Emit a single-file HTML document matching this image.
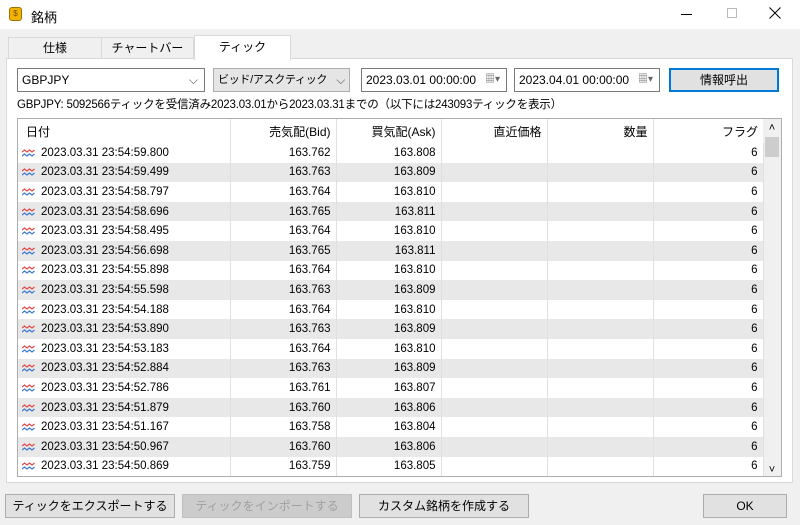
<!DOCTYPE html>
<html><head><meta charset="utf-8"><style>
*{margin:0;padding:0;box-sizing:border-box}
body{width:800px;height:525px;background:#f0f0f0;font-family:"Liberation Sans","Noto Sans CJK JP",sans-serif;font-size:12px;color:#000;position:relative;overflow:hidden}
.abs{position:absolute}
.title{left:0;top:0;width:800px;height:29px;background:#fff}
.tab{top:37px;height:22px;border:1px solid #d9d9d9;border-bottom:none;background:#f0f0f0;text-align:center;line-height:21px}
.panel{left:6px;top:58px;width:787px;height:425px;background:#fff;border:1px solid #d9d9d9}
.box{height:24px;border:1px solid #7a7a7a;background:#fff;line-height:22px;padding-left:4px;white-space:nowrap;overflow:hidden}
.btn{height:24px;border:1px solid #adadad;background:#e1e1e1;text-align:center;line-height:22px}
table{border-collapse:collapse;position:absolute;left:18px;top:119px;width:745px;table-layout:fixed}
td{height:19.6px;padding:0 5px;text-align:right;border-right:1px solid #e0e0e0;white-space:nowrap;overflow:hidden;font-size:11.5px}
td:first-child{text-align:left;padding-left:4px}
tr.h td{height:24px;vertical-align:middle;font-size:12px}
tr.g td{background:#e8e8e8}
td svg{vertical-align:-1px;margin-right:6px}
</style></head><body>
<svg width="0" height="0" style="position:absolute"><defs><g id="w"><path d="M0 3 L2.5 1 L5 3 L7.5 1 L10 3 L12.5 1" stroke="#e04848" fill="none" stroke-width="1.2"/><path d="M0 7 L2.5 5 L5 7 L7.5 5 L10 7 L12.5 5" stroke="#3a78d0" fill="none" stroke-width="1.2"/></g></defs></svg>
<div class="abs title">
<div class="abs" style="left:9px;top:7px;width:13px;height:14px;background:#f0b400;border-radius:3px;border:1px solid #a07000;font-size:8px;line-height:12px;text-align:center;color:#7a4a00">$</div>
<div class="abs" style="left:31px;top:7px;font-size:13px">銘柄</div>
<div class="abs" style="left:681px;top:14px;width:11px;height:1px;background:#000"></div>
<div class="abs" style="left:727px;top:8px;width:10px;height:10px;border:1px solid #bbb"></div>
<svg class="abs" style="left:769px;top:7px" width="12" height="12"><path d="M0.5 0.5 L11.5 11.5 M11.5 0.5 L0.5 11.5" stroke="#000" stroke-width="1"/></svg>
</div>
<div class="abs tab" style="left:8px;width:94px">仕様</div>
<div class="abs tab" style="left:101px;width:93px">チャートバー</div>
<div class="abs panel"></div>
<div class="abs tab" style="left:194px;top:35px;width:97px;height:25px;background:#fff;line-height:22px;z-index:2">ティック</div>
<div class="abs box" style="left:17px;top:68px;width:188px">GBPJPY<span class="abs" style="right:6px;top:0;color:#555">⌵</span></div>
<div class="abs box" style="left:213px;top:68px;width:137px;background:#e5e5e5;border-color:#adadad;font-size:11px;letter-spacing:-0.3px">ビッド/アスクティック<span class="abs" style="right:4px;top:0;color:#555;background:#e5e5e5;padding-left:3px;font-size:12px">⌵</span></div>
<div class="abs box" style="left:361px;top:68px;width:146px">2023.03.01 00:00:00<span class="abs" style="right:6px;top:0;color:#666;font-size:10px">▦▾</span></div>
<div class="abs box" style="left:514px;top:68px;width:146px">2023.04.01 00:00:00<span class="abs" style="right:6px;top:0;color:#666;font-size:10px">▦▾</span></div>
<div class="abs btn" style="left:669px;top:68px;width:110px;border:2px solid #0078d7;line-height:20px">情報呼出</div>
<div class="abs" style="left:17px;top:96px;font-size:11.5px;letter-spacing:-0.2px">GBPJPY: 5092566ティックを受信済み2023.03.01から2023.03.31までの（以下には243093ティックを表示）</div>
<div class="abs" style="left:17px;top:118px;width:765px;height:359px;border:1px solid #adadad"></div>
<div class="abs" style="left:763px;top:119px;width:18px;height:357px;background:#f0f0f0"><div style="text-align:center;font-size:11px;line-height:18px">˄</div><div style="margin:0 2px;height:20px;background:#cdcdcd"></div><div class="abs" style="bottom:0;width:18px;text-align:center;font-size:11px">˅</div></div>
<table>
<colgroup><col style="width:212px"><col style="width:106px"><col style="width:105px"><col style="width:106px"><col style="width:106px"><col style="width:110px"></colgroup>
<tr class="h"><td style="padding-left:8px">日付</td><td>売気配(Bid)</td><td>買気配(Ask)</td><td>直近価格</td><td>数量</td><td style="border:none">フラグ</td></tr>
<tr><td><svg width="13" height="8"><use href="#w"/></svg>2023.03.31 23:54:59.800</td><td>163.762</td><td>163.808</td><td></td><td></td><td>6</td></tr>
<tr class="g"><td><svg width="13" height="8"><use href="#w"/></svg>2023.03.31 23:54:59.499</td><td>163.763</td><td>163.809</td><td></td><td></td><td>6</td></tr>
<tr><td><svg width="13" height="8"><use href="#w"/></svg>2023.03.31 23:54:58.797</td><td>163.764</td><td>163.810</td><td></td><td></td><td>6</td></tr>
<tr class="g"><td><svg width="13" height="8"><use href="#w"/></svg>2023.03.31 23:54:58.696</td><td>163.765</td><td>163.811</td><td></td><td></td><td>6</td></tr>
<tr><td><svg width="13" height="8"><use href="#w"/></svg>2023.03.31 23:54:58.495</td><td>163.764</td><td>163.810</td><td></td><td></td><td>6</td></tr>
<tr class="g"><td><svg width="13" height="8"><use href="#w"/></svg>2023.03.31 23:54:56.698</td><td>163.765</td><td>163.811</td><td></td><td></td><td>6</td></tr>
<tr><td><svg width="13" height="8"><use href="#w"/></svg>2023.03.31 23:54:55.898</td><td>163.764</td><td>163.810</td><td></td><td></td><td>6</td></tr>
<tr class="g"><td><svg width="13" height="8"><use href="#w"/></svg>2023.03.31 23:54:55.598</td><td>163.763</td><td>163.809</td><td></td><td></td><td>6</td></tr>
<tr><td><svg width="13" height="8"><use href="#w"/></svg>2023.03.31 23:54:54.188</td><td>163.764</td><td>163.810</td><td></td><td></td><td>6</td></tr>
<tr class="g"><td><svg width="13" height="8"><use href="#w"/></svg>2023.03.31 23:54:53.890</td><td>163.763</td><td>163.809</td><td></td><td></td><td>6</td></tr>
<tr><td><svg width="13" height="8"><use href="#w"/></svg>2023.03.31 23:54:53.183</td><td>163.764</td><td>163.810</td><td></td><td></td><td>6</td></tr>
<tr class="g"><td><svg width="13" height="8"><use href="#w"/></svg>2023.03.31 23:54:52.884</td><td>163.763</td><td>163.809</td><td></td><td></td><td>6</td></tr>
<tr><td><svg width="13" height="8"><use href="#w"/></svg>2023.03.31 23:54:52.786</td><td>163.761</td><td>163.807</td><td></td><td></td><td>6</td></tr>
<tr class="g"><td><svg width="13" height="8"><use href="#w"/></svg>2023.03.31 23:54:51.879</td><td>163.760</td><td>163.806</td><td></td><td></td><td>6</td></tr>
<tr><td><svg width="13" height="8"><use href="#w"/></svg>2023.03.31 23:54:51.167</td><td>163.758</td><td>163.804</td><td></td><td></td><td>6</td></tr>
<tr class="g"><td><svg width="13" height="8"><use href="#w"/></svg>2023.03.31 23:54:50.967</td><td>163.760</td><td>163.806</td><td></td><td></td><td>6</td></tr>
<tr><td><svg width="13" height="8"><use href="#w"/></svg>2023.03.31 23:54:50.869</td><td>163.759</td><td>163.805</td><td></td><td></td><td>6</td></tr>
</table>
<div class="abs btn" style="left:5px;top:494px;width:170px">ティックをエクスポートする</div>
<div class="abs btn" style="left:182px;top:494px;width:170px;color:#a0a0a0;background:#ccc;border-color:#bfbfbf">ティックをインポートする</div>
<div class="abs btn" style="left:359px;top:494px;width:170px">カスタム銘柄を作成する</div>
<div class="abs btn" style="left:703px;top:494px;width:84px">OK</div>
</body></html>
